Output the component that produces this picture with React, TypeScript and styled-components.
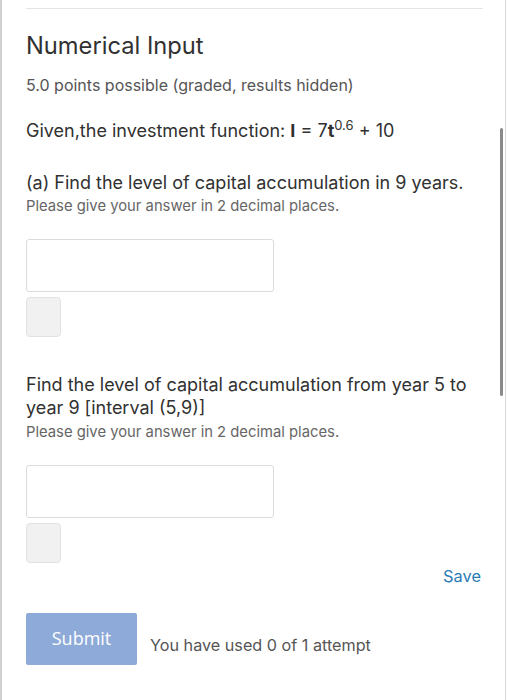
import React from "react";
import styled, { createGlobalStyle } from "styled-components";

const Global = createGlobalStyle`
  html, body { margin: 0; padding: 0; background: #fff; }
  body { font-family: Inter, "Noto Sans", sans-serif; color: #313131; }
  * { box-sizing: border-box; }
`;

const Frame = styled.div`
  position: relative;
  width: 508px;
  height: 700px;
  overflow: hidden;
  border-left: 2px solid #d0d0d0;
  padding: 8px 0 0 24px;
`;

const RightEdge = styled.div`
  position: absolute;
  top: 0;
  right: 2px;
  width: 1px;
  height: 700px;
  background: #d8d8d8;
`;

const ScrollThumb = styled.div`
  position: absolute;
  top: 128px;
  right: 5px;
  width: 3px;
  height: 268px;
  border-radius: 2px;
  background: #8a8a8a;
`;

const Rule = styled.div`
  width: 457px;
  height: 1px;
  background: #e4e4e4;
`;

const Title = styled.h2`
  margin: 22px 0 0;
  font-size: 23.7px;
  font-weight: 400;
  line-height: 30px;
  color: #313131;
`;

const Meta = styled.div`
  margin-top: 14px;
  font-size: 16px;
  line-height: 20px;
  color: #555;
`;

const Prompt = styled.p<{ $top: number }>`
  margin: ${(p) => p.$top}px 0 0;
  font-size: 18px;
  line-height: 23px;
  color: #313131;
  width: 457px;
`;

const Sup = styled.sup`
  font-size: 13px;
  line-height: 0;
  vertical-align: 7px;
`;

const Hint = styled.div<{ $top: number }>`
  margin-top: ${(p) => p.$top}px;
  font-size: 14.8px;
  line-height: 20px;
  color: #666;
`;

const AnswerInput = styled.input`
  display: block;
  margin-top: 23px;
  width: 248px;
  height: 53px;
  border: 1px solid #dcdcdc;
  border-radius: 3px;
  background: #fff;
  outline: none;
`;

const StatusBox = styled.div`
  margin-top: 5px;
  width: 35px;
  height: 40px;
  border: 1px solid #e2e2e2;
  border-radius: 4px;
  background: #f1f1f1;
`;

const SaveRow = styled.div`
  display: flex;
  justify-content: flex-end;
  width: 455px;
  margin-top: 2px;
`;

const SaveLink = styled.span`
  font-size: 16.4px;
  line-height: 22px;
  color: #2b7bb5;
`;

const ActionRow = styled.div`
  display: flex;
  align-items: flex-end;
  gap: 13px;
  margin-top: 26px;
`;

const SubmitButton = styled.button`
  width: 111px;
  height: 52px;
  border: none;
  border-radius: 2px;
  background: #8eaad9;
  color: #fff;
  font-family: "Open Sans", sans-serif;
  font-size: 18px;
  padding: 0 0 2px;
`;

const Attempts = styled.span`
  font-size: 16.2px;
  line-height: 20px;
  color: #555;
  padding-bottom: 10px;
`;

export default function App() {
  return (
    <>
      <Global />
      <Frame>
        <RightEdge />
        <ScrollThumb />
        <Rule />
        <Title>Numerical Input</Title>
        <Meta>5.0 points possible (graded, results hidden)</Meta>
        <Prompt $top={24}>
          Given,the investment function: <b>I</b> = 7<b>t</b>
          <Sup>0.6</Sup> + 10
        </Prompt>
        <Prompt $top={29}>(a) Find the level of capital accumulation in 9 years.</Prompt>
        <Hint $top={2}>Please give your answer in 2 decimal places.</Hint>
        <AnswerInput />
        <StatusBox />
        <Prompt $top={36}>
          Find the level of capital accumulation from year 5 to year 9 [interval (5,9)]
        </Prompt>
        <Hint $top={3}>Please give your answer in 2 decimal places.</Hint>
        <AnswerInput />
        <StatusBox />
        <SaveRow>
          <SaveLink>Save</SaveLink>
        </SaveRow>
        <ActionRow>
          <SubmitButton>Submit</SubmitButton>
          <Attempts>You have used 0 of 1 attempt</Attempts>
        </ActionRow>
      </Frame>
    </>
  );
}
